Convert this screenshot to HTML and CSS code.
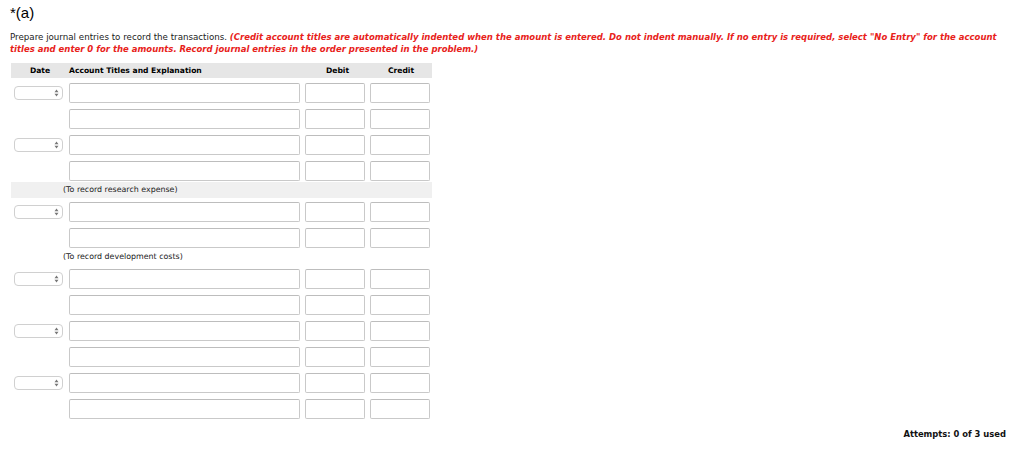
FILE: index.html
```html
<!DOCTYPE html>
<html>
<head>
<meta charset="utf-8">
<link rel="stylesheet" href="styles.css">
</head>
<body>
<div class="page">
  <h1 class="title">*(a)</h1>
  <p class="instr">Prepare journal entries to record the transactions. <em class="note">(Credit account titles are automatically indented when the amount is entered. Do not indent manually. If no entry is required, select "No Entry" for the account titles and enter 0 for the amounts. Record journal entries in the order presented in the problem.)</em></p>

  <div class="journal">
    <div class="head">
      <div class="h-date">Date</div>
      <div class="h-acct">Account Titles and Explanation</div>
      <div class="h-num">Debit</div>
      <div class="h-num">Credit</div>
    </div>

    <div class="row">
      <div class="c-date"><span class="sel"><svg class="arr" width="5" height="8" viewBox="0 0 5 8"><path d="M0.5 3.2L2.5 0.6L4.5 3.2Z M0.5 4.8L2.5 7.4L4.5 4.8Z" fill="#777"/></svg></span></div>
      <div class="c-acct"><span class="box"></span></div>
      <div class="c-num"><span class="box"></span></div>
      <div class="c-num"><span class="box"></span></div>
    </div>
    <div class="row">
      <div class="c-date"></div>
      <div class="c-acct"><span class="box"></span></div>
      <div class="c-num"><span class="box"></span></div>
      <div class="c-num"><span class="box"></span></div>
    </div>
    <div class="row">
      <div class="c-date"><span class="sel"><svg class="arr" width="5" height="8" viewBox="0 0 5 8"><path d="M0.5 3.2L2.5 0.6L4.5 3.2Z M0.5 4.8L2.5 7.4L4.5 4.8Z" fill="#777"/></svg></span></div>
      <div class="c-acct"><span class="box"></span></div>
      <div class="c-num"><span class="box"></span></div>
      <div class="c-num"><span class="box"></span></div>
    </div>
    <div class="row">
      <div class="c-date"></div>
      <div class="c-acct"><span class="box"></span></div>
      <div class="c-num"><span class="box"></span></div>
      <div class="c-num"><span class="box"></span></div>
    </div>
    <div class="expl shaded">(To record research expense)</div>

    <div class="row">
      <div class="c-date"><span class="sel"><svg class="arr" width="5" height="8" viewBox="0 0 5 8"><path d="M0.5 3.2L2.5 0.6L4.5 3.2Z M0.5 4.8L2.5 7.4L4.5 4.8Z" fill="#777"/></svg></span></div>
      <div class="c-acct"><span class="box"></span></div>
      <div class="c-num"><span class="box"></span></div>
      <div class="c-num"><span class="box"></span></div>
    </div>
    <div class="row">
      <div class="c-date"></div>
      <div class="c-acct"><span class="box"></span></div>
      <div class="c-num"><span class="box"></span></div>
      <div class="c-num"><span class="box"></span></div>
    </div>
    <div class="expl">(To record development costs)</div>

    <div class="row">
      <div class="c-date"><span class="sel"><svg class="arr" width="5" height="8" viewBox="0 0 5 8"><path d="M0.5 3.2L2.5 0.6L4.5 3.2Z M0.5 4.8L2.5 7.4L4.5 4.8Z" fill="#777"/></svg></span></div>
      <div class="c-acct"><span class="box"></span></div>
      <div class="c-num"><span class="box"></span></div>
      <div class="c-num"><span class="box"></span></div>
    </div>
    <div class="row">
      <div class="c-date"></div>
      <div class="c-acct"><span class="box"></span></div>
      <div class="c-num"><span class="box"></span></div>
      <div class="c-num"><span class="box"></span></div>
    </div>
    <div class="row">
      <div class="c-date"><span class="sel"><svg class="arr" width="5" height="8" viewBox="0 0 5 8"><path d="M0.5 3.2L2.5 0.6L4.5 3.2Z M0.5 4.8L2.5 7.4L4.5 4.8Z" fill="#777"/></svg></span></div>
      <div class="c-acct"><span class="box"></span></div>
      <div class="c-num"><span class="box"></span></div>
      <div class="c-num"><span class="box"></span></div>
    </div>
    <div class="row">
      <div class="c-date"></div>
      <div class="c-acct"><span class="box"></span></div>
      <div class="c-num"><span class="box"></span></div>
      <div class="c-num"><span class="box"></span></div>
    </div>
    <div class="row">
      <div class="c-date"><span class="sel"><svg class="arr" width="5" height="8" viewBox="0 0 5 8"><path d="M0.5 3.2L2.5 0.6L4.5 3.2Z M0.5 4.8L2.5 7.4L4.5 4.8Z" fill="#777"/></svg></span></div>
      <div class="c-acct"><span class="box"></span></div>
      <div class="c-num"><span class="box"></span></div>
      <div class="c-num"><span class="box"></span></div>
    </div>
    <div class="row">
      <div class="c-date"></div>
      <div class="c-acct"><span class="box"></span></div>
      <div class="c-num"><span class="box"></span></div>
      <div class="c-num"><span class="box"></span></div>
    </div>
  </div>

  <div class="footer"><span class="attempts">Attempts: 0 of 3 used</span></div>
</div>
</body>
</html>
```

FILE: styles.css
```css
html, body {
  margin: 0;
  padding: 0;
  background: #fff;
}
.page {
  padding: 4px 10px 0 10px;
  font-family: "DejaVu Sans", Verdana, sans-serif;
  color: #111;
}
.title {
  margin: 0;
  font-family: "Liberation Sans", Arial, sans-serif;
  font-weight: normal;
  font-size: 15px;
  line-height: 18px;
  color: #000;
}
.instr {
  margin: 10px 0 0 0;
  font-size: 8.7px;
  line-height: 11.5px;
  color: #222;
}
.note {
  color: #e8221a;
  font-weight: bold;
  font-style: italic;
  font-size: 8.5px;
}
.journal {
  width: 421px;
  margin: 8px 0 0 1px;
}
.head {
  display: grid;
  grid-template-columns: 58px 236px 65px 62px;
  height: 15px;
  align-items: center;
  background: #e6e6e6;
  font-size: 7.6px;
  font-weight: bold;
  color: #000;
}
.h-date { text-align: center; }
.h-num { text-align: center; }
.row {
  display: grid;
  grid-template-columns: 58px 236px 65px 62px;
  height: 20px;
  align-items: center;
  margin-top: 6px;
}
.head + .row { margin-top: 5px; }
.expl + .row { margin-top: 4px; }
.row > div {
  display: flex;
  align-items: center;
  height: 20px;
}
.c-date { padding-left: 3px; }
.box {
  display: block;
  width: 231px;
  height: 20px;
  box-sizing: border-box;
  border: 1px solid #c9c9c9;
  border-top-color: #bdbdbd;
  border-radius: 2px;
  background: #fff;
}
.c-num .box { width: 60px; }
.sel {
  display: flex;
  align-items: center;
  justify-content: flex-end;
  width: 49px;
  height: 14px;
  box-sizing: border-box;
  border: 1px solid #d0d0d0;
  border-radius: 4px;
  padding-right: 3px;
  background: #fff;
}
.arr { display: block; }
.expl {
  height: 16px;
  line-height: 16px;
  padding-left: 52px;
  font-size: 7.9px;
  color: #222;
  margin-top: 1px;
}
.shaded {
  background: #f0f0f0;
}
.footer {
  display: flex;
  justify-content: flex-end;
  padding-right: 8px;
  margin-top: 9px;
  line-height: 12px;
}
.attempts {
  font-size: 8.4px;
  font-weight: bold;
  color: #111;
}
```
